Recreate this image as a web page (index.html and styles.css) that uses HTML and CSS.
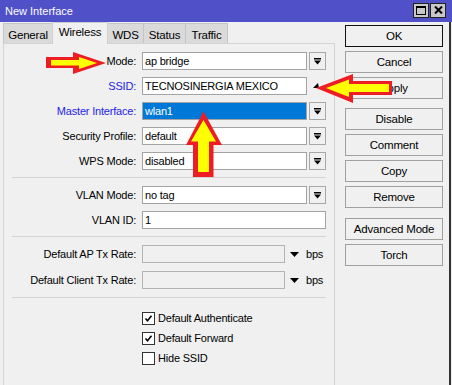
FILE: index.html
```html
<!DOCTYPE html>
<html>
<head>
<meta charset="utf-8">
<link rel="stylesheet" href="styles.css">
</head>
<body>
<div class="titlebar">
  <span class="title">New Interface</span>
  <div class="tbtns">
    <span class="tbtn"><svg width="10" height="9" viewBox="0 0 10 9"><rect x="0.5" y="0.5" width="9" height="8" fill="none" stroke="#000"/><rect x="0" y="0" width="10" height="2" fill="#000"/></svg></span>
    <span class="tbtn"><svg width="9" height="8" viewBox="0 0 9 8"><path d="M1 0.5 L8 7.5 M8 0.5 L1 7.5" stroke="#000" stroke-width="2" fill="none"/></svg></span>
  </div>
</div>
<div class="main">
  <div class="left">
    <div class="tabs">
      <span class="tab t-general">General</span>
      <span class="tab active t-wireless">Wireless</span>
      <span class="tab t-wds">WDS</span>
      <span class="tab t-status">Status</span>
      <span class="tab t-traffic">Traffic</span>
    </div>
    <div class="panel">
      <div class="row">
        <span class="label">Mode:</span>
        <span class="input">ap bridge</span>
        <span class="dd"><svg width="7" height="7" viewBox="0 0 7 7"><rect x="0" y="0" width="7" height="1.5"/><polygon points="0,2.5 7,2.5 3.5,6.5"/></svg></span>
      </div>
      <div class="row">
        <span class="label blue">SSID:</span>
        <span class="input">TECNOSINERGIA MEXICO</span>
        <span class="mark"><svg width="6" height="5" viewBox="0 0 6 5"><polygon points="5,0 6,5 0,5"/></svg></span>
      </div>
      <div class="row">
        <span class="label blue">Master Interface:</span>
        <span class="input selected">wlan1</span>
        <span class="dd"><svg width="7" height="7" viewBox="0 0 7 7"><rect x="0" y="0" width="7" height="1.5"/><polygon points="0,2.5 7,2.5 3.5,6.5"/></svg></span>
      </div>
      <div class="row">
        <span class="label">Security Profile:</span>
        <span class="input">default</span>
        <span class="dd"><svg width="7" height="7" viewBox="0 0 7 7"><rect x="0" y="0" width="7" height="1.5"/><polygon points="0,2.5 7,2.5 3.5,6.5"/></svg></span>
      </div>
      <div class="row">
        <span class="label">WPS Mode:</span>
        <span class="input">disabled</span>
        <span class="dd"><svg width="7" height="7" viewBox="0 0 7 7"><rect x="0" y="0" width="7" height="1.5"/><polygon points="0,2.5 7,2.5 3.5,6.5"/></svg></span>
      </div>
      <div class="sep"></div>
      <div class="row">
        <span class="label">VLAN Mode:</span>
        <span class="input">no tag</span>
        <span class="dd"><svg width="7" height="7" viewBox="0 0 7 7"><rect x="0" y="0" width="7" height="1.5"/><polygon points="0,2.5 7,2.5 3.5,6.5"/></svg></span>
      </div>
      <div class="row">
        <span class="label">VLAN ID:</span>
        <span class="input full">1</span>
      </div>
      <div class="sep"></div>
      <div class="row wide">
        <span class="label">Default AP Tx Rate:</span>
        <span class="input rate"></span>
        <svg class="tri" width="9" height="5" viewBox="0 0 9 5"><polygon points="0,0 9,0 4.5,5"/></svg>
        <span class="unit">bps</span>
      </div>
      <div class="row wide">
        <span class="label">Default Client Tx Rate:</span>
        <span class="input rate"></span>
        <svg class="tri" width="9" height="5" viewBox="0 0 9 5"><polygon points="0,0 9,0 4.5,5"/></svg>
        <span class="unit">bps</span>
      </div>
      <div class="sep"></div>
      <div class="checks">
        <div class="check"><span class="box"><svg width="11" height="11" viewBox="0 0 11 11"><path d="M2.5 5.5 L4.5 7.8 L8.5 2.8" stroke="#000" stroke-width="1.6" fill="none"/></svg></span><span>Default Authenticate</span></div>
        <div class="check"><span class="box"><svg width="11" height="11" viewBox="0 0 11 11"><path d="M2.5 5.5 L4.5 7.8 L8.5 2.8" stroke="#000" stroke-width="1.6" fill="none"/></svg></span><span>Default Forward</span></div>
        <div class="check"><span class="box"></span><span>Hide SSID</span></div>
      </div>
    </div>
  </div>
  <div class="buttons">
    <div class="btn default">OK</div>
    <div class="btn">Cancel</div>
    <div class="btn">Apply</div>
    <div class="btn g2">Disable</div>
    <div class="btn">Comment</div>
    <div class="btn">Copy</div>
    <div class="btn">Remove</div>
    <div class="btn g3">Advanced Mode</div>
    <div class="btn">Torch</div>
  </div>
  <div class="edge"></div>
</div>
<svg class="arrows" width="452" height="385" viewBox="0 0 452 385">
  <g fill="#ee1c24">
    <polygon points="46,57 73,57 73,52 106,63 73,74 73,68 46,68"/>
    <polygon points="316,88 353,74 353,81 392,81 392,95 353,95 353,103"/>
    <polygon points="203.5,111.5 186,145 193,145 193,177 213.5,177 213.5,145 222,145"/>
  </g>
  <g fill="#ffff00">
    <polygon points="51,60 79,60 79,57 97,63 79,69 79,65.5 51,65.5"/>
    <polygon points="326,88 349,79.5 349,84 389,84 389,92 349,92 349,97"/>
    <polygon points="203.5,120 191,141.5 198,141.5 198,172 209,172 209,141.5 216,141.5"/>
  </g>
</svg>
</body>
</html>
```

FILE: styles.css
```css
body {
  margin: 0;
  width: 452px;
  height: 385px;
  overflow: hidden;
  position: relative;
  background: #f0f0f0;
  font: 11px "Liberation Sans", Arial, sans-serif;
  letter-spacing: -0.2px;
  color: #000;
}

.titlebar {
  height: 22px;
  background: #5050c8;
  display: flex;
  align-items: center;
  padding-left: 5px;
  color: #fff;
}

.title {
  flex: 1;
  font-size: 11px;
  letter-spacing: 0;
}

.tbtns {
  display: flex;
  gap: 1px;
  margin-right: 6px;
  margin-top: -2px;
}

.tbtn {
  width: 16px;
  height: 15px;
  box-sizing: border-box;
  background: #c8c8c8;
  border: 1px solid #222;
  display: flex;
  align-items: center;
  justify-content: center;
}

.main {
  display: flex;
  height: 363px;
}

.left {
  margin-left: 3px;
  width: 332px;
  display: flex;
  flex-direction: column;
}

.tabs {
  display: flex;
  align-items: flex-end;
  height: 21px;
}

.tab {
  box-sizing: border-box;
  height: 20px;
  border: 1px solid #c4c4c4;
  border-bottom: none;
  background: #dadada;
  padding-top: 3px;
  line-height: 16px;
  text-align: center;
  margin-right: -1px;
  font-size: 11.5px;
}

.tab.active {
  height: 22px;
  margin-bottom: -1px;
  background: #f0f0f0;
  border-color: #d0d0d0;
  padding-top: 1px;
  position: relative;
  z-index: 1;
}

.t-general { width: 50px; }
.t-wireless { width: 56px; }
.t-wds { width: 37px; }
.t-status { width: 43px; }
.t-traffic { width: 43px; }

.panel {
  flex: 1;
  border: 1px solid #d4d4d4;
  border-bottom: none;
  padding-top: 8px;
}

.row {
  display: flex;
  align-items: center;
  height: 18px;
  margin-bottom: 7px;
}

.row.wide {
  margin-bottom: 8px;
}

.label {
  flex: none;
  width: 132px;
  margin-right: 6px;
  text-align: right;
  white-space: nowrap;
}

.label.blue {
  color: #2424e6;
}

.input {
  flex: none;
  box-sizing: border-box;
  width: 165px;
  height: 18px;
  border: 1px solid #a3a3a3;
  background: #fff;
  padding-left: 2px;
  line-height: 16px;
  white-space: nowrap;
  overflow: hidden;
}

.input.selected {
  background: #0078d7;
  color: #fff;
}

.input.full {
  width: 184px;
}

.input.rate {
  width: 143px;
  background: #f0f0f0;
  border-color: #b4b4b4;
}

.dd {
  flex: none;
  box-sizing: border-box;
  width: 17px;
  height: 18px;
  margin-left: 2px;
  border: 1px solid #a8a8a8;
  background: #f0f0f0;
  display: flex;
  align-items: center;
  justify-content: center;
}

.mark {
  flex: none;
  width: 17px;
  height: 18px;
  margin-left: 6px;
  display: flex;
  align-items: flex-start;
  padding-top: 6px;
  box-sizing: border-box;
}

.tri {
  flex: none;
  margin-left: 5px;
}

.unit {
  margin-left: 7px;
}

.sep {
  width: 314px;
  height: 1px;
  background: #d4d4d4;
  margin: 2px 0 8px 8px;
}

.checks {
  padding-top: 6px;
}

.check {
  display: flex;
  align-items: center;
  height: 13px;
  margin-bottom: 7px;
  padding-left: 138px;
  line-height: 13px;
}

.box {
  box-sizing: border-box;
  width: 13px;
  height: 13px;
  border: 1px solid #333;
  background: #fff;
  margin-right: 3px;
  display: flex;
  align-items: center;
  justify-content: center;
}

.buttons {
  margin-left: 10px;
  margin-top: 3px;
  width: 98px;
  display: flex;
  flex-direction: column;
}

.btn {
  box-sizing: border-box;
  height: 22px;
  border: 1px solid #a0a0a0;
  text-align: center;
  line-height: 20px;
  margin-bottom: 4px;
  font-size: 11.5px;
}

.btn.default {
  border-color: #111;
}

.btn.g2 {
  margin-top: 5px;
}

.btn.g3 {
  margin-top: 6px;
}

.edge {
  margin-left: auto;
  margin-right: 1px;
  width: 2px;
  background: #333;
}

.arrows {
  position: absolute;
  left: 0;
  top: 0;
  pointer-events: none;
}
```
